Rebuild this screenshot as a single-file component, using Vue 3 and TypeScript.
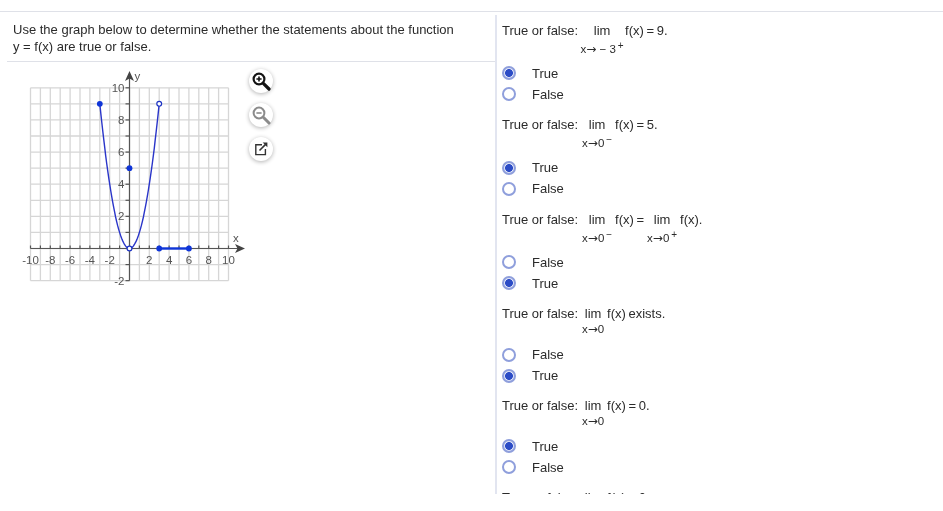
<script setup lang="ts">
interface Limit {
  to: string
  sup?: string
  width: number
}
interface Question {
  parts: (string | Limit)[]
  options: string[]
  picked: string
  tall: boolean
}

const questions: Question[] = [
  { parts: [{ to: ' − 3', sup: '+', width: 42 }, 'f(x) = 9.'], options: ['True', 'False'], picked: 'True', tall: true },
  { parts: [{ to: '0', sup: '−', width: 32 }, 'f(x) = 5.'], options: ['True', 'False'], picked: 'True', tall: true },
  {
    parts: [{ to: '0', sup: '−', width: 32 }, 'f(x) =', { to: '0', sup: '+', width: 32 }, 'f(x).'],
    options: ['False', 'True'],
    picked: 'True',
    tall: true,
  },
  { parts: [{ to: '0', width: 24 }, 'f(x) exists.'], options: ['False', 'True'], picked: 'True', tall: false },
  { parts: [{ to: '0', width: 24 }, 'f(x) = 0.'], options: ['True', 'False'], picked: 'True', tall: false },
  // only the top edge of this one is visible, the pane cuts it off
  { parts: [{ to: '3', width: 24 }, 'f(x) = 0.'], options: [], picked: '', tall: false },
]

// plot scale, in px of the svg
const originX = 129.5
const originY = 186.5
const unitX = 9.9
const unitY = 16.07

const sx = (x: number) => originX + x * unitX
const sy = (y: number) => originY - y * unitY

const xs = Array.from({ length: 21 }, (_, i) => i - 10)
const ys = Array.from({ length: 13 }, (_, i) => i - 2)
const xLabels = [-10, -8, -6, -4, -2, 2, 4, 6, 8, 10]
const yLabels = [-2, 2, 4, 6, 8, 10]

const curve = Array.from({ length: 61 }, (_, i) => {
  const x = -3 + i * 0.1
  return `${sx(x).toFixed(1)},${sy(x * x).toFixed(1)}`
}).join(' ')
</script>

<template>
  <div class="page">
    <div class="columns">
      <section class="left">
        <p class="intro">
          Use the graph below to determine whether the statements about the function<br />y = f(x) are true or false.
        </p>
        <div class="figure">
          <svg class="graph" width="249" height="225" viewBox="0 0 249 225">
            <g class="grid">
              <line v-for="x in xs" :key="'gx' + x" :x1="sx(x)" :x2="sx(x)" :y1="sy(10)" :y2="sy(-2)" />
              <line v-for="y in ys" :key="'gy' + y" :x1="sx(-10)" :x2="sx(10)" :y1="sy(y)" :y2="sy(y)" />
            </g>
            <g class="axis">
              <line :x1="sx(-10)" x2="240" :y1="originY" :y2="originY" />
              <line :x1="originX" :x2="originX" y1="14" :y2="sy(-2)" />
              <line v-for="x in xs" :key="'tx' + x" :x1="sx(x)" :x2="sx(x)" :y1="originY - 3" :y2="originY" />
              <line v-for="y in ys" :key="'ty' + y" :x1="originX - 4" :x2="originX" :y1="sy(y)" :y2="sy(y)" />
            </g>
            <path class="arrow" d="M245 186.5 L235 182 L237.5 186.5 L235 191 Z" />
            <path class="arrow" d="M129.5 9 L125 19 L129.5 16.5 L134 19 Z" />
            <text v-for="x in xLabels" :key="'lx' + x" class="label" :x="sx(x)" y="201.5" text-anchor="middle">{{ x }}</text>
            <text v-for="y in yLabels" :key="'ly' + y" class="label" x="124.5" :y="sy(y) + 4" text-anchor="end">{{ y }}</text>
            <text class="label" x="134.5" y="17.5">y</text>
            <text class="label" x="233" y="180">x</text>
            <polyline class="curve" :points="curve" />
            <line class="segment" :x1="sx(3)" :x2="sx(6)" :y1="originY" :y2="originY" />
            <circle class="dot" :cx="sx(-3)" :cy="sy(9)" r="2.9" />
            <circle class="dot" :cx="sx(0)" :cy="sy(5)" r="2.9" />
            <circle class="dot" :cx="sx(3)" :cy="sy(0)" r="2.9" />
            <circle class="dot" :cx="sx(6)" :cy="sy(0)" r="2.9" />
            <circle class="hole" :cx="sx(3)" :cy="sy(9)" r="2.4" />
            <circle class="hole" :cx="sx(0)" :cy="sy(0)" r="2.4" />
          </svg>
          <div class="tools">
            <button class="tool" type="button" aria-label="Zoom in">
              <svg width="20" height="20" viewBox="0 0 20 20" fill="none" stroke="#141414">
                <circle cx="8" cy="8" r="5.4" stroke-width="2.2" />
                <path d="M12.3 12.3 L18 18" stroke-width="3.2" stroke-linecap="round" />
                <path d="M5.4 8 H10.6 M8 5.4 V10.6" stroke-width="1.6" />
              </svg>
            </button>
            <button class="tool" type="button" aria-label="Zoom out">
              <svg width="20" height="20" viewBox="0 0 20 20" fill="none" stroke="#8b8b8b">
                <circle cx="8" cy="8" r="5.4" stroke-width="2" />
                <path d="M12.3 12.3 L18 18" stroke-width="3" stroke-linecap="round" />
                <path d="M5.4 8 H10.6" stroke-width="1.6" />
              </svg>
            </button>
            <button class="tool" type="button" aria-label="Open in new window">
              <svg width="16" height="16" viewBox="0 0 16 16" fill="none" stroke="#333">
                <path d="M9 3.8 H2.8 V13.6 H12.4 V8" stroke-width="1.4" />
                <path d="M6.5 9.5 L12.6 3.4" stroke-width="1.6" />
                <path d="M9.7 1.6 H14.4 V6.3 Z" fill="#333" stroke="none" />
              </svg>
            </button>
          </div>
        </div>
      </section>

      <section class="right">
        <div v-for="(q, qi) in questions" :key="qi" class="question">
          <div class="statement" :class="{ tall: q.tall }">
            <span class="lead">True or false:</span>
            <template v-for="(part, pi) in q.parts" :key="pi">
              <span v-if="typeof part === 'string'" class="plain">{{ part }}</span>
              <span v-else class="limit" :style="{ width: part.width + 'px' }">
                <span class="lim">lim</span>
                <span class="under">x<span class="arr">→</span>{{ part.to }}<sup v-if="part.sup">{{ part.sup }}</sup></span>
              </span>
            </template>
          </div>
          <div class="options">
            <label v-for="opt in q.options" :key="opt" class="option">
              <span class="radio" :class="{ on: opt === q.picked }"></span>
              <span>{{ opt }}</span>
            </label>
          </div>
        </div>
      </section>
    </div>
  </div>
</template>

<style scoped>
.page {
  width: 943px;
  height: 511px;
  padding-top: 11px;
  box-sizing: border-box;
  overflow: hidden;
  background: #fff;
  color: #2b2b2b;
  font-family: 'Liberation Sans', Arial, sans-serif;
  font-size: 13px;
  filter: blur(0.35px);
}

.columns {
  display: flex;
  height: 482px;
  border-top: 1px solid #dfe1e8;
}

.left {
  width: 495px;
  flex: none;
}

.intro {
  margin: 0 0 0 7px;
  padding: 10px 0 6px 6px;
  height: 33px;
  line-height: 16.5px;
  border-bottom: 1.5px solid #dfe1e8;
}

.figure {
  display: flex;
}

.graph {
  flex: none;
  display: block;
}

.grid line {
  stroke: #d6d6d6;
  stroke-width: 1.3;
}

.axis line {
  stroke: #555;
  stroke-width: 1.2;
}

.arrow {
  fill: #444;
}

.label {
  font-size: 11.5px;
  fill: #555;
}

.curve {
  fill: none;
  stroke: #2a35c9;
  stroke-width: 1.4;
}

.segment {
  stroke: #0f35d8;
  stroke-width: 2.4;
}

.dot {
  fill: #0f35d8;
}

.hole {
  fill: #fff;
  stroke: #1c33c4;
  stroke-width: 1.2;
}

.tools {
  display: flex;
  flex-direction: column;
  gap: 10px;
  padding-top: 7px;
}

.tool {
  display: flex;
  align-items: center;
  justify-content: center;
  width: 24px;
  height: 24px;
  padding: 0;
  border: 0;
  border-radius: 50%;
  background: #fff;
  box-shadow: 0 1px 4px rgba(0, 0, 0, 0.3);
}

.right {
  flex: 1;
  margin-top: 3px;
  padding-left: 5px;
  border-left: 2px solid #e2e5f0;
  overflow: hidden;
}

.question {
  padding: 7.5px 0 5px;
}

.question:nth-child(4) .options {
  margin-bottom: -1px;
}

.statement {
  display: flex;
  align-items: flex-start;
  gap: 2px;
  height: 38px;
  line-height: 16px;
}

.statement.tall {
  height: 40px;
}

.plain {
  word-spacing: -1px;
}

.lead {
  margin-right: 1px;
}

.limit {
  display: flex;
  flex-direction: column;
  align-items: center;
  flex: none;
  white-space: pre;
}

.under {
  font-size: 11.5px;
  line-height: 13px;
  margin-top: 1px;
}

.statement.tall .under {
  margin-top: 4px;
}

.arr {
  font-family: 'DejaVu Sans', sans-serif;
  font-size: 12px;
}

.under sup {
  font-size: 10px;
  line-height: 0;
  vertical-align: 4px;
  margin-left: 2px;
}

.options {
  display: flex;
  flex-direction: column;
}

.option {
  display: flex;
  align-items: center;
  gap: 16px;
  height: 21px;
}

.radio {
  box-sizing: border-box;
  width: 14px;
  height: 14px;
  border: 2px solid #8f9fdc;
  border-radius: 50%;
  background: #fff;
}

.radio.on {
  background: radial-gradient(circle, #2c4cc6 0 3.6px, #dfe4f7 4.2px);
}
</style>

<style>
body {
  background: #fff;
}
</style>
